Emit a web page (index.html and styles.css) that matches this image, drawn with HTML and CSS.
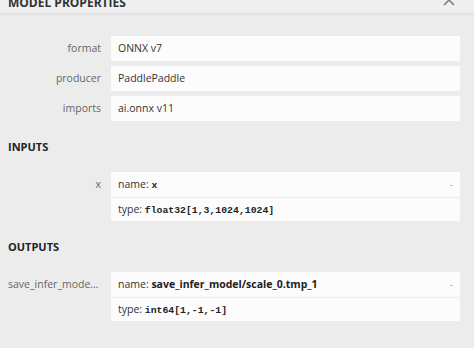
FILE: index.html
```html
<!DOCTYPE html>
<html lang="en">
<head>
  <meta charset="UTF-8">
  <title>Model Properties</title>
  <link rel="stylesheet" href="styles.css">
</head>
<body>
  <div class="sidebar">
    <div class="sidebar-header">
      <span class="sidebar-title">Model Properties</span>
      <svg class="sidebar-close" width="12" height="12" viewBox="0 0 12 12">
        <path d="M1 1 L11 11 M11 1 L1 11" stroke="#7a7a7a" stroke-width="1.5" fill="none"/>
      </svg>
    </div>
    <div class="sidebar-content">
      <div class="item">
        <div class="item-name">format</div>
        <div class="item-box"><div class="item-value">ONNX v7</div></div>
      </div>
      <div class="item">
        <div class="item-name">producer</div>
        <div class="item-box"><div class="item-value">PaddlePaddle</div></div>
      </div>
      <div class="item">
        <div class="item-name">imports</div>
        <div class="item-box"><div class="item-value">ai.onnx v11</div></div>
      </div>

      <div class="section-title">Inputs</div>
      <div class="item">
        <div class="item-name">x</div>
        <div class="item-box">
          <div class="item-value item-head">
            <span>name: <b class="code">x</b></span>
            <span class="expander">-</span>
          </div>
          <div class="item-value">type: <span class="code">float32[1,3,1024,1024]</span></div>
        </div>
      </div>

      <div class="section-title">Outputs</div>
      <div class="item">
        <div class="item-name">save_infer_model/scale_0.tmp_1</div>
        <div class="item-box">
          <div class="item-value item-head">
            <span>name: <b>save_infer_model/scale_0.tmp_1</b></span>
            <span class="expander">-</span>
          </div>
          <div class="item-value">type: <span class="code">int64[1,-1,-1]</span></div>
        </div>
      </div>
    </div>
  </div>
</body>
</html>
```

FILE: styles.css
```css
/* Sidebar */
body {
  margin: 0;
  background: #ececec;
  font-family: 'Open Sans', 'Noto Sans', sans-serif;
  font-size: 10.5px;
  color: #333;
  overflow: hidden;
}

.sidebar {
  height: 348px;
}

.sidebar-header {
  display: flex;
  justify-content: space-between;
  align-items: flex-start;
  height: 20px;
  margin-top: -7px;
  padding: 0 19px 0 8px;
  background: #efefef;
  box-shadow: 0 1px 3px rgba(0, 0, 0, 0.08);
}

.sidebar-title {
  font-weight: bold;
  font-size: 12px;
  line-height: 20px;
  text-transform: uppercase;
  color: #333;
}

.sidebar-close {
  margin-top: 1px;
}

.sidebar-content {
  padding: 23px 14px 0 0;
}

.item {
  display: flex;
  margin-bottom: 5px;
}

.item-name {
  width: 93px;
  flex-shrink: 0;
  padding: 0 10px 0 8px;
  line-height: 25px;
  text-align: right;
  color: #666;
  white-space: nowrap;
  overflow: hidden;
  text-overflow: ellipsis;
}

.item-box {
  flex: 1;
  background: #fcfcfc;
}

.item-value {
  height: 25px;
  line-height: 25px;
  padding: 0 7px;
  white-space: nowrap;
}

.item-head {
  display: flex;
  justify-content: space-between;
}

.item-value + .item-value {
  border-top: 1px solid #ececec;
  height: 23px;
  line-height: 23px;
}

.item-value b {
  color: #222;
}

.code {
  font-family: 'Liberation Mono', 'DejaVu Sans Mono', monospace;
  font-size: 9.8px;
  color: #222;
}

b.code,
.item-value .code {
  font-weight: bold;
}

.expander {
  color: #aaa;
  font-size: 10px;
}

.section-title {
  margin: 16px 0 15px;
  padding: 0 8px;
  line-height: 20px;
  font-weight: bold;
  font-size: 11px;
  text-transform: uppercase;
  color: #222;
}
```
